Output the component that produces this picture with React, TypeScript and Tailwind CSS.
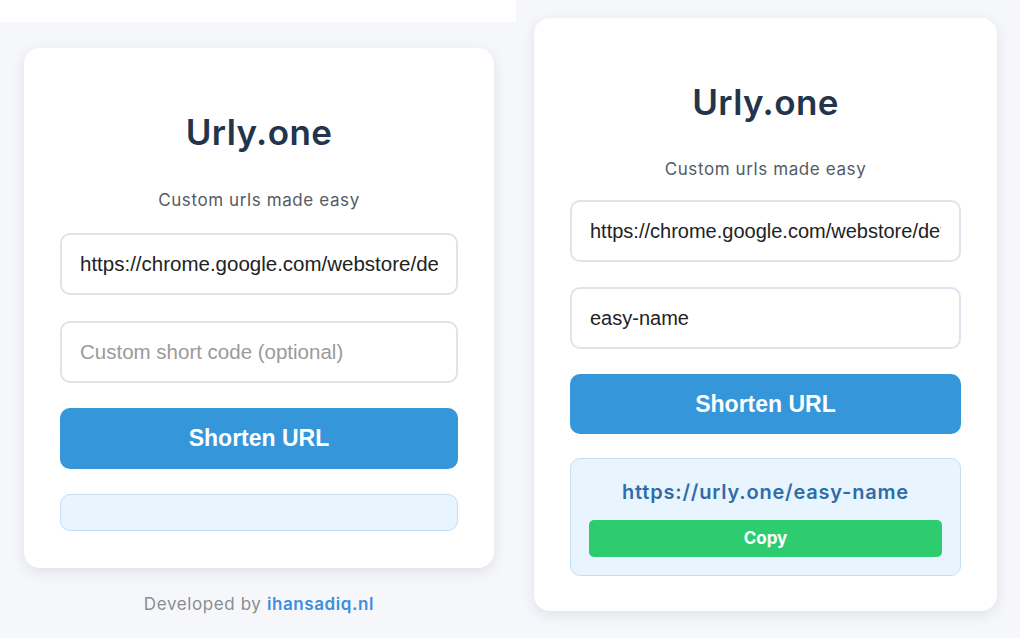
import React from 'react'

const sans = { fontFamily: 'Inter, "Noto Sans", sans-serif' }
const arial = { fontFamily: '"Liberation Sans", Arial, sans-serif' }

type CardProps = {
  compact?: boolean
  shortCode?: string
  result?: string
}

function Card({ compact, shortCode, result }: CardProps) {
  const inputText = compact ? 'text-[20px]' : 'text-[20.5px]'
  return (
    <div
      className={`${compact ? 'w-[463px] pb-[35px]' : 'w-[470px] pb-[37px]'} bg-white rounded-2xl shadow-[0_4px_14px_rgba(30,40,80,0.10)] px-[36px] pt-[60px]`}
    >
      <h1 style={sans} className="text-center text-[35px] leading-[48px] font-semibold text-[#23354a] tracking-[0.4px]">
        Urly.one
      </h1>
      <p
        style={sans}
        className={`${compact ? 'mt-[31px]' : 'mt-[32px]'} text-center text-[17px] leading-[24px] text-[#555b63] tracking-[0.6px]`}
      >
        Custom urls made easy
      </p>

      {/* Form */}
      <div className={`${compact ? 'mt-[19px] gap-[24px]' : 'mt-[21px] gap-[25px]'} flex flex-col`}>
        <input
          readOnly
          value="https://chrome.google.com/webstore/detail/urly-one/abcdefghijklmnop"
          style={arial}
          className={`h-[62px] w-full rounded-[10px] border-2 border-[#dfe4ec] bg-white px-[18px] ${inputText} text-[#222] outline-none`}
        />
        <input
          readOnly
          value={shortCode ?? ''}
          placeholder="Custom short code (optional)"
          style={arial}
          className={`mt-px h-[62px] w-full rounded-[10px] border-2 border-[#dfe4ec] bg-white px-[18px] ${inputText} text-[#222] outline-none placeholder:text-[#9a9a9a]`}
        />
        <button
          style={arial}
          className={`${compact ? 'mt-px h-[60px]' : 'h-[61px]'} w-full rounded-[10px] bg-[#3596da] text-[23px] font-bold text-white`}
        >
          Shorten URL
        </button>

        {/* Result */}
        {result ? (
          <div className="rounded-[10px] border border-[#c4def4] bg-[#e8f5fe] px-[18px] pt-[20px] pb-[18px]">
            <div style={sans} className="text-center text-[20px] leading-[26px] font-semibold text-[#2f6ca8] tracking-[0.8px]">
              {result}
            </div>
            <button
              style={sans}
              className="mt-[15px] h-[37px] w-full rounded-[5px] bg-[#2ecc71] text-[17px] font-bold text-white"
            >
              Copy
            </button>
          </div>
        ) : (
          <div className="h-[37px] rounded-[10px] border border-[#c4def4] bg-[#e8f5fe]" />
        )}
      </div>
    </div>
  )
}

export default function App() {
  return (
    <div className="flex h-[638px] w-[1020px] overflow-hidden bg-[#f6f7fb]">
      {/* Left screenshot */}
      <div className="flex w-[516px] flex-col">
        <div className="h-[22px] w-full bg-white" />
        <div className="mt-[26px] ml-[24px]">
          <Card />
        </div>
        <p style={sans} className="mt-[24px] ml-[24px] w-[470px] text-center text-[17px] leading-[24px] text-[#8a8d92] tracking-[0.6px]">
          Developed by <span className="font-semibold text-[#3b8fdb]">ihansadiq.nl</span>
        </p>
      </div>

      {/* Right screenshot */}
      <div className="flex-1 pt-[18px] pl-[18px]">
        <Card compact shortCode="easy-name" result="https://urly.one/easy-name" />
      </div>
    </div>
  )
}
